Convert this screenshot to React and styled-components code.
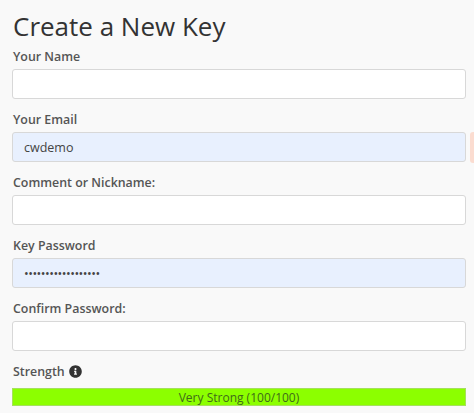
import styled, { createGlobalStyle } from "styled-components";
import { FaInfoCircle } from "react-icons/fa";

const GlobalStyle = createGlobalStyle`
  html, body {
    margin: 0;
    padding: 0;
    background: #f9f9f9;
    overflow: hidden;
  }
  * {
    box-sizing: border-box;
  }
`;

const Page = styled.div`
  position: relative;
  width: 474px;
  height: 413px;
  padding: 8px 8px 0 12px;
  font-family: "Open Sans", "Liberation Sans", sans-serif;
  color: #333;
`;

const Title = styled.h1`
  margin: 0 0 1px 1px;
  font-size: 26px;
  line-height: 36px;
  font-weight: 400;
  color: #333;
`;

const Field = styled.div`
  margin-bottom: 9px;
`;

const Label = styled.label`
  display: flex;
  align-items: center;
  gap: 4px;
  height: 22px;
  margin: 0 0 ${(p) => p.$gap || 2}px 1px;
  font-size: 12.4px;
  font-weight: 600;
  color: #555;
`;

const Input = styled.input`
  display: block;
  width: 100%;
  height: 30px;
  padding: 0 11px;
  border: 1px solid #d8d8d8;
  border-radius: 3px;
  outline: none;
  font-family: inherit;
  font-size: 12.5px;
  letter-spacing: ${(p) => (p.type === "password" ? "-0.5px" : "0")};
  color: #444;
  background: ${(p) => (p.$filled ? "#e8f0fe" : "#fff")};
`;

const Bar = styled.div`
  height: 18px;
  background: #8cff00;
  border: 1px solid #a5e05c;
  text-align: center;
  font-size: 12px;
  line-height: 17px;
  color: #3f6a1a;
`;

const EdgeTab = styled.div`
  position: absolute;
  top: 132px;
  right: 0;
  width: 4px;
  height: 31px;
  border-radius: 3px 0 0 3px;
  background: #fbdcd0;
`;

const App = () => {
  return (
    <Page>
      <GlobalStyle />
      <Title>Create a New Key</Title>
      <Field>
        <Label>Your Name</Label>
        <Input type="text" readOnly />
      </Field>
      <Field>
        <Label>Your Email</Label>
        <Input type="text" value="cwdemo" readOnly $filled />
      </Field>
      <Field>
        <Label>Comment or Nickname:</Label>
        <Input type="text" readOnly />
      </Field>
      <Field>
        <Label>Key Password</Label>
        <Input type="password" value="aaaaaaaaaaaaaaaaaa" readOnly $filled />
      </Field>
      <Field>
        <Label>Confirm Password:</Label>
        <Input type="password" readOnly />
      </Field>
      <Field>
        <Label $gap={6}>
          Strength <FaInfoCircle size={13} color="#333" />
        </Label>
        <Bar>Very Strong (100/100)</Bar>
      </Field>
      <EdgeTab />
    </Page>
  );
};

export default App;
